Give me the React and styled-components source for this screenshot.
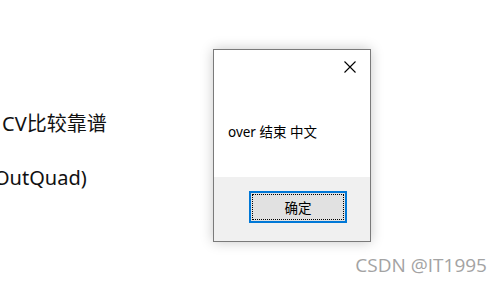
import React from "react";
import styled, { createGlobalStyle } from "styled-components";

const Global = createGlobalStyle`
  html, body { margin: 0; padding: 0; background: #fff; }
  body { width: 503px; height: 285px; overflow: hidden; font-family: "Noto Sans", "Noto Sans CJK SC", sans-serif; }
`;

const Page = styled.div`
  position: relative;
  width: 503px;
  height: 285px;
  overflow: hidden;
  background: #fff;
`;

const Article = styled.div`
  display: flex;
  flex-direction: column;
  gap: 27px;
  padding-top: 110px;
`;

const Line = styled.div`
  font-family: "Noto Sans", "Noto Sans CJK SC", sans-serif;
  font-size: 20px;
  line-height: 27px;
  color: #111;
  white-space: nowrap;
  margin-left: ${(p) => p.$shift}px;
`;

const Dialog = styled.div`
  position: absolute;
  left: 213px;
  top: 49px;
  width: 156px;
  height: 191px;
  border: 1px solid #7a7a7a;
  background: #fff;
  box-shadow: 0 0 12px rgba(0, 0, 0, 0.22);
  display: flex;
  flex-direction: column;
`;

const Body = styled.div`
  height: 127px;
  display: flex;
  flex-direction: column;
`;

const TitleRow = styled.div`
  display: flex;
  justify-content: flex-end;
  padding: 11px 14px 0 0;
`;

const Message = styled.div`
  font-family: "Noto Sans", "Noto Sans CJK SC", sans-serif;
  font-size: 13.5px;
  color: #000;
  padding: 51px 0 0 14px;
  line-height: 16px;
`;

const Footer = styled.div`
  flex: 1;
  background: #f0f0f0;
  display: flex;
  justify-content: flex-start;
  padding: 14px 0 0 35px;
`;

const Button = styled.div`
  width: 94px;
  height: 28px;
  border: 2px solid #0078d7;
  background: #e1e1e1;
  display: flex;
  align-items: center;
  justify-content: center;
  position: relative;
  font-family: "Noto Sans CJK SC", sans-serif;
  font-size: 13.5px;
  color: #000;
  &::after {
    content: "";
    position: absolute;
    inset: 1px;
    border: 1px dotted #000;
  }
`;

const Watermark = styled.div`
  position: absolute;
  right: 16px;
  bottom: 7px;
  font-family: "Open Sans", "Noto Sans", sans-serif;
  font-size: 19px;
  color: #a3a3a3;
`;

export default function App() {
  return (
    <Page>
      <Global />
      <Article>
        <Line $shift={2}>CV比较靠谱</Line>
        <Line $shift={-6}>OutQuad)</Line>
      </Article>
      <Dialog>
        <Body>
          <TitleRow>
            <svg width="12" height="12" viewBox="0 0 12 12">
              <path d="M0.5 0.5 L11.5 11.5 M11.5 0.5 L0.5 11.5" stroke="#000" strokeWidth="1.1" />
            </svg>
          </TitleRow>
          <Message>over 结束 中文</Message>
        </Body>
        <Footer>
          <Button>确定</Button>
        </Footer>
      </Dialog>
      <Watermark>CSDN @IT1995</Watermark>
    </Page>
  );
}
